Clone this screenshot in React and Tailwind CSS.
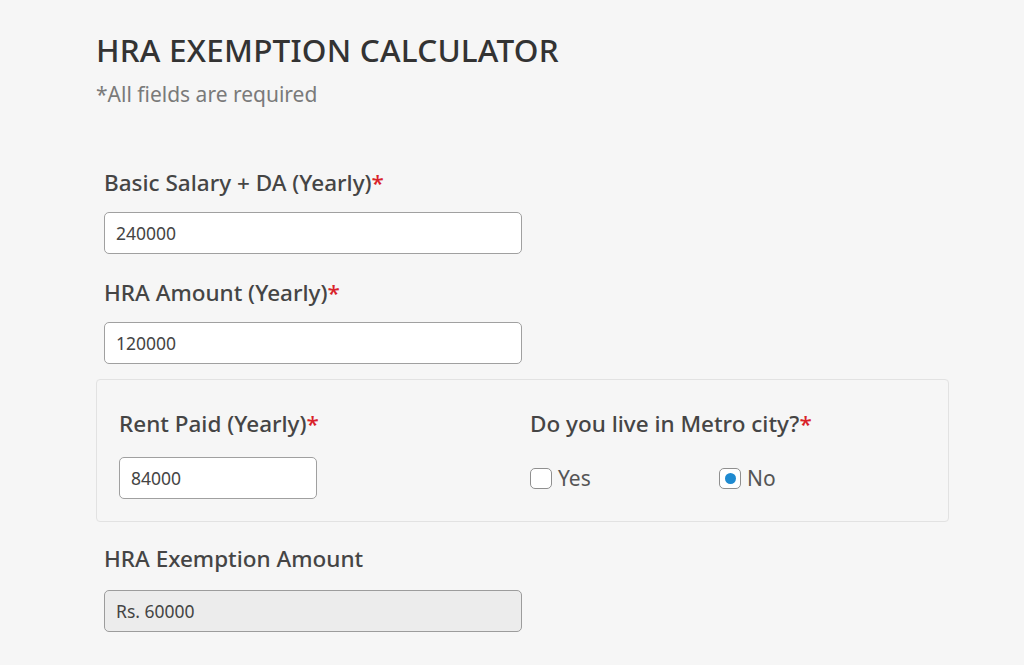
import React, { useState } from 'react';

const font = { fontFamily: '"Noto Sans", "Open Sans", sans-serif' };

const Label = ({ children, required }) => (
    <label className="block text-[22.5px] leading-[28px] font-medium text-[#454545]">
        {children}
        {required && <span className="text-[#d9222a]">*</span>}
    </label>
);

const Box = ({ checked, onClick, label }) => (
    <button type="button" onClick={onClick} className="flex items-center gap-[6px]">
        <span className="w-[22px] h-[21px] rounded-[5px] border border-[#8f8f8f] bg-white flex items-center justify-center">
            {checked && <span className="w-[11px] h-[11px] rounded-full bg-[#1f8ad0]" />}
        </span>
        <span className="text-[21px] leading-[28px] text-[#555]">{label}</span>
    </button>
);

const App = () => {
    const [basic, setBasic] = useState('240000');
    const [hra, setHra] = useState('120000');
    const [rent, setRent] = useState('84000');
    const [metro, setMetro] = useState(false);

    const inputCls = "block h-[42px] rounded-[5px] border px-[11px] text-[17.5px] text-[#444] outline-none";

    return (
        <div className="min-h-[665px] bg-[#f6f6f6] pl-[96px] pt-[30px]" style={font}>
            <h1 className="text-[31.5px] leading-[40px] font-medium text-[#333] tracking-[0.2px]">HRA EXEMPTION CALCULATOR</h1>
            <p className="mt-[10px] text-[21px] leading-[28px] text-[#7a7a7a]">*All fields are required</p>

            <div className="mt-[61px] pl-[8px] w-[426px]">
                <Label required>Basic Salary + DA (Yearly)</Label>
                <input value={basic} onChange={(e) => setBasic(e.target.value)} className={inputCls + " mt-[15px] w-[418px] bg-white border-[#a0a0a0]"} />
                <div className="mt-[25px]">
                    <Label required>HRA Amount (Yearly)</Label>
                </div>
                <input value={hra} onChange={(e) => setHra(e.target.value)} className={inputCls + " mt-[15px] w-[418px] bg-white border-[#a0a0a0]"} />
            </div>

            <div className="mt-[15px] w-[853px] h-[143px] rounded-[4px] border border-[#e2e2e2] bg-[#f6f6f6] px-[22px] pt-[30px] flex">
                <div className="w-[411px]">
                    <Label required>Rent Paid (Yearly)</Label>
                    <input value={rent} onChange={(e) => setRent(e.target.value)} className={inputCls + " mt-[19px] w-[198px] bg-white border-[#a0a0a0]"} />
                </div>
                <div>
                    <Label required>Do you live in Metro city?</Label>
                    <div className="mt-[26px] flex">
                        <div className="w-[189px]">
                            <Box checked={metro} onClick={() => setMetro(true)} label="Yes" />
                        </div>
                        <Box checked={!metro} onClick={() => setMetro(false)} label="No" />
                    </div>
                </div>
            </div>

            <div className="mt-[23px] pl-[8px]">
                <Label>HRA Exemption Amount</Label>
                <input readOnly value="Rs. 60000" className={inputCls + " mt-[17px] w-[418px] bg-[#ececec] border-[#9c9c9c]"} />
            </div>
        </div>
    );
};

export default App;
